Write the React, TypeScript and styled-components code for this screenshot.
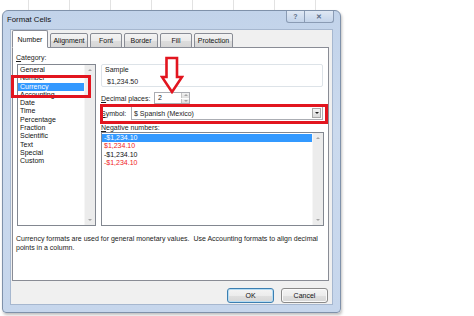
import styled, { createGlobalStyle } from 'styled-components'

const GlobalStyle = createGlobalStyle`
  body {
    margin: 0;
    background: #fff;
    font-family: "Liberation Sans", Arial, sans-serif;
    font-size: 7px;
    color: #1b1b1b;
  }
`

const Sheet = styled.div`
  width: 474px;
  height: 316px;
  overflow: hidden;
  padding-left: 2px;
  box-sizing: border-box;
`

// faint spreadsheet columns peeking out above the dialog
const GridStrip = styled.div`
  width: 342px;
  height: 10px;
  margin-left: -2px;
  background-image: linear-gradient(to right, #e2e2e2 1px, transparent 1px);
  background-size: 41px 100%;
  background-position: 28px 0;
`

const Window = styled.div`
  width: 339px;
  height: 303px;
  box-sizing: border-box;
  border: 1px solid #7f91aa;
  border-radius: 6px 6px 4px 4px;
  background: linear-gradient(#c2d3ea, #cbdaee 40%, #c6d6ec);
  padding: 0 7px 7px;
  display: flex;
  flex-direction: column;
  box-shadow: 1px 2px 3px rgba(0, 0, 0, 0.25);
`

const TitleBar = styled.div`
  height: 18px;
  margin: 0 -7px;
  padding-left: 4px;
  display: flex;
  align-items: flex-start;
`

const Title = styled.span`
  flex: 1;
  font-size: 7.8px;
  line-height: 18px;
  color: #111;
`

const CaptionButtons = styled.div`
  display: flex;
  margin-right: 6px;
`

const CaptionButton = styled.div<{ $w: number; $last?: boolean }>`
  width: ${p => p.$w}px;
  height: 12px;
  box-sizing: border-box;
  border: 1px solid #8a9bb4;
  border-top: none;
  border-left: ${p => (p.$last ? 'none' : '1px solid #8a9bb4')};
  border-radius: ${p => (p.$last ? '0 0 3px 0' : '0 0 0 3px')};
  background: linear-gradient(#dfe8f4, #c4d4ea);
  display: flex;
  align-items: center;
  justify-content: center;
  color: #5d6f88;
  font-size: 7px;
  font-weight: bold;
`

const Client = styled.div`
  flex: 1;
  box-sizing: border-box;
  border: 1px solid #a6b7cf;
  background: #f0f0f0;
  padding: 3px 3px 0 1px;
  display: flex;
  flex-direction: column;
`

const TabRow = styled.div`
  display: flex;
  align-items: flex-end;
  gap: 2px;
  height: 15px;
  margin-bottom: -1px;
  position: relative;
  z-index: 1;
`

const Tab = styled.div<{ $w: number; $active?: boolean }>`
  width: ${p => p.$w}px;
  height: ${p => (p.$active ? 18 : 15)}px;
  box-sizing: border-box;
  border: 1px solid #898c95;
  border-bottom: ${p => (p.$active ? '1px solid #fff' : '1px solid #898c95')};
  border-radius: 2px 2px 0 0;
  background: ${p =>
    p.$active ? '#fff' : 'linear-gradient(#f3f3f3, #ebebeb 50%, #dddddd 51%, #d6d6d6)'};
  display: flex;
  align-items: center;
  justify-content: center;
  color: #111;
`

const Panel = styled.div`
  position: relative;
  width: 317px;
  height: 234px;
  box-sizing: border-box;
  border: 1px solid #898c95;
  background: #fff;
  padding: 5px 4px 0 3px;
  display: flex;
  flex-direction: column;
`

const Columns = styled.div`
  display: flex;
  gap: 5px;
`

const LeftColumn = styled.div`
  width: 80px;
  display: flex;
  flex-direction: column;
`

const RightColumn = styled.div`
  flex: 1;
  display: flex;
  flex-direction: column;
  padding-top: 11px;
`

const Label = styled.div`
  height: 9px;
  line-height: 9px;
  white-space: nowrap;
`

const ListWrap = styled.div`
  position: relative;
  margin: 2px 0 0 1px;
`

const ListBox = styled.div<{ $w: number; $h: number }>`
  width: ${p => p.$w}px;
  height: ${p => p.$h}px;
  box-sizing: border-box;
  border: 1px solid #828790;
  background: #fff;
  display: flex;
`

const ListItems = styled.div`
  flex: 1;
  padding-top: 1px;
  overflow: hidden;
`

const Item = styled.div<{ $selected?: boolean; $red?: boolean }>`
  height: 8.3px;
  line-height: 8.3px;
  padding-left: 2px;
  white-space: nowrap;
  background: ${p => (p.$selected ? '#3399ff' : 'transparent')};
  color: ${p => (p.$selected ? '#fff' : p.$red ? '#f01c1c' : '#111')};
`

const ScrollTrack = styled.div`
  width: 10px;
  background: #ececec;
  border-left: 1px solid #f6f6f6;
  display: flex;
  flex-direction: column;
  justify-content: space-between;
  align-items: center;
  padding: 4px 0;
`

const Arrow = styled.div<{ $up?: boolean; $dark?: boolean }>`
  width: 0;
  height: 0;
  border-left: 2.5px solid transparent;
  border-right: 2.5px solid transparent;
  ${p =>
    p.$up
      ? `border-bottom: 2.5px solid ${p.$dark ? '#222' : '#a5a5a5'};`
      : `border-top: 2.5px solid ${p.$dark ? '#222' : '#a5a5a5'};`}
`

const SampleGroup = styled.div`
  width: 222px;
  height: 23px;
  box-sizing: border-box;
  border: 1px solid #dde3e8;
  border-radius: 2px;
  padding: 0 3px;
`

const SampleValue = styled.div`
  height: 9px;
  line-height: 9px;
  margin-top: 3px;
  padding-left: 2px;
`

const FieldRow = styled.div<{ $h: number; $gap: number }>`
  position: relative;
  display: flex;
  align-items: center;
  height: ${p => p.$h}px;
  margin-top: ${p => p.$gap}px;
`

const FieldLabel = styled.span<{ $w: number }>`
  width: ${p => p.$w}px;
  white-space: nowrap;
`

const Spin = styled.div`
  width: 36px;
  height: 12px;
  box-sizing: border-box;
  border: 1px solid #abadb3;
  background: #fff;
  display: flex;
`

const SpinValue = styled.span`
  flex: 1;
  padding-left: 3px;
  line-height: 10px;
`

const SpinButtons = styled.div`
  width: 8px;
  display: flex;
  flex-direction: column;
  gap: 1px;
  background: #fff;
`

const SpinHalf = styled.div`
  flex: 1;
  background: linear-gradient(#f2f2f2, #dedede);
  border: 1px solid #c3c3c3;
  border-width: 0 0 0 1px;
  display: flex;
  align-items: center;
  justify-content: center;
`

const Select = styled.div`
  width: 192px;
  height: 14px;
  box-sizing: border-box;
  border: 1px solid #abadb3;
  background: #fff;
  display: flex;
  align-items: center;
  padding-right: 1px;
`

const SelectText = styled.span`
  flex: 1;
  padding-left: 2px;
`

const DropButton = styled.div`
  width: 9px;
  height: 10px;
  box-sizing: border-box;
  border: 1px solid #a9a9a9;
  background: linear-gradient(#f4f4f4, #dadada);
  display: flex;
  align-items: center;
  justify-content: center;
`

const NegLabel = styled(Label)`
  margin-top: 3px;
`

const NegList = styled.div`
  margin-top: 0;
`

const Description = styled.p`
  margin: 8px 0 0;
  line-height: 9px;
  color: #222;
  white-space: nowrap;
`

const CategoryMark = styled.div`
  position: absolute;
  left: -6px;
  top: 11px;
  width: 80px;
  height: 23px;
  box-sizing: border-box;
  border: 3px solid #e2151f;
  pointer-events: none;
`

const SymbolMark = styled.div`
  position: absolute;
  left: -1px;
  top: -2px;
  width: 228px;
  height: 20px;
  box-sizing: border-box;
  border: 3px solid #e2151f;
  pointer-events: none;
`

const DownArrow = styled.svg`
  position: absolute;
  left: 147px;
  top: 8px;
  width: 24px;
  height: 38px;
  pointer-events: none;
`

const ButtonRow = styled.div`
  display: flex;
  justify-content: flex-end;
  gap: 7px;
  margin-top: 7px;
  padding-right: 1px;
`

const Button = styled.button<{ $default?: boolean }>`
  width: 47px;
  height: 15px;
  padding: 0;
  font-family: inherit;
  font-size: 7px;
  color: #111;
  border: 1px solid ${p => (p.$default ? '#3c7fb1' : '#8a8a8a')};
  border-radius: 3px;
  background: linear-gradient(#f4f4f4, #ececec 50%, #e0e0e0 51%, #d6d6d6);
  box-shadow: inset 0 0 0 1px ${p => (p.$default ? '#b6dcf3' : '#fafafa')};
`

const categories = [
  'General',
  'Number',
  'Currency',
  'Accounting',
  'Date',
  'Time',
  'Percentage',
  'Fraction',
  'Scientific',
  'Text',
  'Special',
  'Custom',
]

const negatives = [
  { text: '-$1,234.10', red: false },
  { text: '$1,234.10', red: true },
  { text: '-$1,234.10', red: false },
  { text: '-$1,234.10', red: true },
]

const tabs = [
  { name: 'Number', w: 36 },
  { name: 'Alignment', w: 38 },
  { name: 'Font', w: 32 },
  { name: 'Border', w: 34 },
  { name: 'Fill', w: 32 },
  { name: 'Protection', w: 39 },
]

export default function App() {
  return (
    <>
      <GlobalStyle />
      <Sheet>
        <GridStrip />
        <Window>
          <TitleBar>
            <Title>Format Cells</Title>
            <CaptionButtons>
              <CaptionButton $w={19}>?</CaptionButton>
              <CaptionButton $w={29} $last>
                ✕
              </CaptionButton>
            </CaptionButtons>
          </TitleBar>
          <Client>
            <TabRow>
              {tabs.map((t, i) => (
                <Tab key={t.name} $w={t.w} $active={i === 0}>
                  {t.name}
                </Tab>
              ))}
            </TabRow>
            <Panel>
              <Columns>
                <LeftColumn>
                  <Label>
                    <u>C</u>ategory:
                  </Label>
                  <ListWrap>
                    <ListBox $w={79} $h={162}>
                      <ListItems>
                        {categories.map(c => (
                          <Item key={c} $selected={c === 'Currency'}>
                            {c}
                          </Item>
                        ))}
                      </ListItems>
                      <ScrollTrack>
                        <Arrow $up />
                        <Arrow />
                      </ScrollTrack>
                    </ListBox>
                    <CategoryMark />
                  </ListWrap>
                </LeftColumn>
                <RightColumn>
                  <SampleGroup>
                    <Label>Sample</Label>
                    <SampleValue>$1,234.50</SampleValue>
                  </SampleGroup>
                  <FieldRow $h={12} $gap={5}>
                    <FieldLabel $w={53}>
                      <u>D</u>ecimal places:
                    </FieldLabel>
                    <Spin>
                      <SpinValue>2</SpinValue>
                      <SpinButtons>
                        <SpinHalf>
                          <Arrow $up />
                        </SpinHalf>
                        <SpinHalf>
                          <Arrow />
                        </SpinHalf>
                      </SpinButtons>
                    </Spin>
                  </FieldRow>
                  <FieldRow $h={14} $gap={2}>
                    <FieldLabel $w={30}>
                      <u>S</u>ymbol:
                    </FieldLabel>
                    <Select>
                      <SelectText>$ Spanish (Mexico)</SelectText>
                      <DropButton>
                        <Arrow $dark />
                      </DropButton>
                    </Select>
                    <SymbolMark />
                  </FieldRow>
                  <NegLabel>
                    <u>N</u>egative numbers:
                  </NegLabel>
                  <NegList>
                    <ListBox $w={223} $h={94}>
                      <ListItems>
                        {negatives.map((n, i) => (
                          <Item key={i} $selected={i === 0} $red={n.red}>
                            {n.text}
                          </Item>
                        ))}
                      </ListItems>
                      <ScrollTrack>
                        <Arrow $up />
                        <Arrow />
                      </ScrollTrack>
                    </ListBox>
                  </NegList>
                </RightColumn>
              </Columns>
              <Description>
                Currency formats are used for general monetary values.&nbsp; Use Accounting formats to
                align decimal
                <br />
                points in a column.
              </Description>
              <DownArrow viewBox="0 0 24 38">
                <path
                  d="M6.5 2 H17 V21 H22 L12 36 L2 21 H6.5 Z"
                  fill="#fff"
                  stroke="#e2151f"
                  strokeWidth="2.6"
                  strokeLinejoin="miter"
                />
              </DownArrow>
            </Panel>
            <ButtonRow>
              <Button $default>OK</Button>
              <Button>Cancel</Button>
            </ButtonRow>
          </Client>
        </Window>
      </Sheet>
    </>
  )
}
